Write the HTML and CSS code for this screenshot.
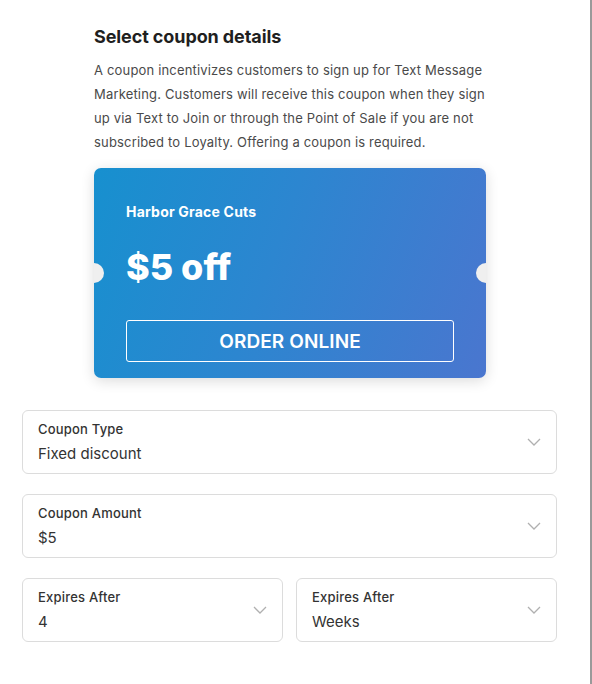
FILE: index.html
```html
<!DOCTYPE html>
<html>
<head>
<meta charset="utf-8">
<link rel="stylesheet" href="styles.css">
</head>
<body>
<div class="page">
  <section class="intro">
    <h2 class="title">Select coupon details</h2>
    <p class="desc">A coupon incentivizes customers to sign up for Text Message Marketing. Customers will receive this coupon when they sign up via Text to Join or through the Point of Sale if you are not subscribed to Loyalty. Offering a coupon is required.</p>
    <div class="coupon">
      <span class="notch notch-left"></span>
      <span class="notch notch-right"></span>
      <div class="merchant">Harbor Grace Cuts</div>
      <div class="amount">$5 off</div>
      <div class="order-btn">ORDER ONLINE</div>
    </div>
  </section>
  <div class="fields">
    <div class="field">
      <div class="field-text">
        <div class="label">Coupon Type</div>
        <div class="value">Fixed discount</div>
      </div>
      <svg class="chev" width="14" height="8" viewBox="0 0 14 8"><path d="M1 1 L7 7 L13 1" fill="none" stroke="#b0b0b0" stroke-width="1.3"/></svg>
    </div>
    <div class="field">
      <div class="field-text">
        <div class="label">Coupon Amount</div>
        <div class="value">$5</div>
      </div>
      <svg class="chev" width="14" height="8" viewBox="0 0 14 8"><path d="M1 1 L7 7 L13 1" fill="none" stroke="#b0b0b0" stroke-width="1.3"/></svg>
    </div>
    <div class="row">
      <div class="field">
        <div class="field-text">
          <div class="label">Expires After</div>
          <div class="value">4</div>
        </div>
        <svg class="chev" width="14" height="8" viewBox="0 0 14 8"><path d="M1 1 L7 7 L13 1" fill="none" stroke="#b0b0b0" stroke-width="1.3"/></svg>
      </div>
      <div class="field">
        <div class="field-text">
          <div class="label">Expires After</div>
          <div class="value">Weeks</div>
        </div>
        <svg class="chev" width="14" height="8" viewBox="0 0 14 8"><path d="M1 1 L7 7 L13 1" fill="none" stroke="#b0b0b0" stroke-width="1.3"/></svg>
      </div>
    </div>
  </div>
</div>
</body>
</html>
```
FILE: styles.css
```css
* { box-sizing: border-box; }
html, body { margin: 0; padding: 0; background: #fff; }
body { font-family: Inter, "Noto Sans", sans-serif; color: #222; }
.page {
  width: 592px;
  min-height: 684px;
  border-right: 2px solid #9a9a9a;
  padding: 25px 33px 0 22px;
}
.intro { margin: 0 71px 0 72px; }
.title {
  margin: 0;
  font-size: 18px;
  line-height: 24px;
  font-weight: 700;
  color: #1f1f1f;
  letter-spacing: -0.1px;
}
.desc {
  margin: 9px 0 0;
  font-size: 13px;
  line-height: 24px;
  color: #4a4a4a;
  letter-spacing: 0.17px;
}
.coupon {
  position: relative;
  overflow: hidden;
  margin-top: 14px;
  height: 210px;
  border-radius: 7px;
  background: linear-gradient(110deg, #1790cf 0%, #2c86d0 45%, #4a76cf 100%);
  box-shadow: 0 3px 14px rgba(0,0,0,0.14);
  padding: 36px 32px 0 32px;
  color: #fff;
}
.notch {
  position: absolute;
  top: 95px;
  width: 20px;
  height: 20px;
  border-radius: 50%;
  background: #efefef;
}
.notch-left { left: -10px; }
.notch-right { right: -10px; }
.merchant {
  font-size: 14px;
  font-weight: 700;
  line-height: 16px;
  letter-spacing: 0.2px;
}
.amount {
  margin-top: 24px;
  font-size: 36px;
  font-weight: 800;
  line-height: 46px;
}
.order-btn {
  margin-top: 30px;
  height: 42px;
  border: 1px solid #fff;
  border-radius: 3px;
  display: flex;
  align-items: center;
  justify-content: center;
  font-size: 19px;
  font-weight: 600;
  letter-spacing: 0.1px;
}
.fields {
  margin-top: 32px;
  display: flex;
  flex-direction: column;
  gap: 20px;
}
.row {
  display: grid;
  grid-template-columns: 1fr 1fr;
  gap: 13px;
}
.field {
  height: 64px;
  border: 1px solid #dcdcdc;
  border-radius: 6px;
  padding: 0 15px 0 15px;
  display: flex;
  align-items: center;
  justify-content: space-between;
}
.label {
  font-size: 13px;
  line-height: 18px;
  font-weight: 500;
  color: #333;
  letter-spacing: 0.2px;
}
.value {
  margin-top: 6px;
  font-size: 15px;
  line-height: 20px;
  color: #333;
}
.chev { flex: none; }
```
